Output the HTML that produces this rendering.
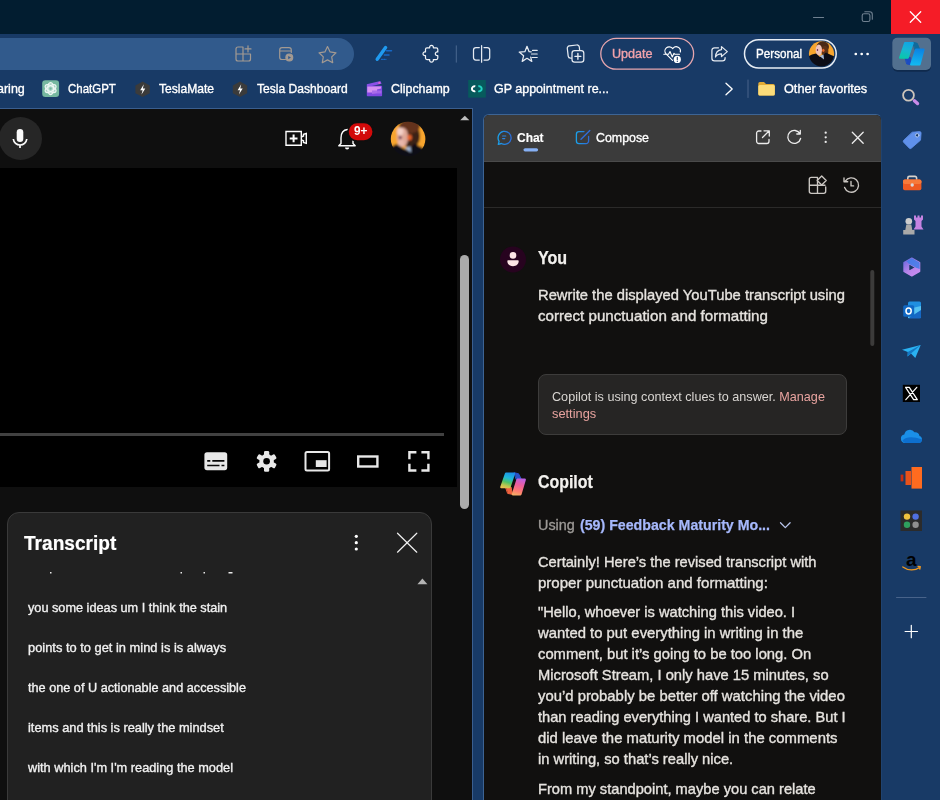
<!DOCTYPE html>
<html lang="en">
<head>
<meta charset="utf-8">
<title>Copilot sidebar - YouTube transcript</title>
<style>
*{box-sizing:border-box;margin:0;padding:0}
html,body{width:940px;height:800px;overflow:hidden}
body{background:#183a66;font-family:"Liberation Sans",sans-serif;position:relative;color:#fff}
.abs{position:absolute}
.t{position:absolute;white-space:nowrap;line-height:1;transform-origin:0 0;-webkit-text-stroke:0.35px currentColor}
svg{position:absolute;overflow:visible}
/* browser chrome */
#titlebar{left:0;top:0;width:940px;height:33.500px;background:#021d30}
#closebtn{left:891.300px;top:0;width:49px;height:33.500px;background:#f51c27}
#addr{left:-40px;top:38px;width:394px;height:32px;border-radius:16px;background:#315a8c}
#chromeline{left:0;top:107.8px;width:473.200px;height:700px;background:#3a5e8e}
.bm{font-size:13.5px;color:#fff;top:82px}
/* youtube page */
#page{left:0;top:109px;width:472.3px;height:691px;background:#0f0f0f;overflow:hidden}
#video{left:0;top:59px;width:457px;height:319px;background:#000}
#prog{left:0;top:323.500px;width:444px;height:3.500px;background:#414141}
#mic{left:-1.500px;top:8px;width:43px;height:43px;border-radius:22px;background:#262626}
#pscroll{left:458px;top:0;width:14px;height:691px;background:#0f0f0f}
#pthumb{left:460px;top:146px;width:9px;height:254px;border-radius:5px;background:#ababab}
#tpanel{left:7px;top:403px;width:425px;height:300px;border:1px solid #3a3a3a;border-radius:12px;background:#212121}
.tl{font-size:12.8px;color:#f1f1f1;left:28px}
/* copilot panel */
#cp{left:482.5px;top:113.5px;width:399px;height:692px;background:#11100f;border-radius:6px 6px 0 0;overflow:hidden;border:1px solid #3d6494;border-right-color:#1f426f}
#cphead{left:0;top:0;width:398px;height:47.800px;background:#3b3b3b;border-bottom:1px solid #4a4a4a}
#cpsep{left:0;top:92.5px;width:398px;height:1px;background:#2b2a29}
.ct{font-size:15.6px;color:#e9e7e4}
#card{left:537.700px;top:373.600px;width:309.500px;height:61px;border:1px solid #3d3c3b;border-radius:8px;background:#262524}
</style>
</head>
<body>
<!-- title bar -->
<div id="titlebar" class="abs"></div>
<div id="closebtn" class="abs"></div>
<div id="addr" class="abs"></div>
<div id="chromeline" class="abs"></div>

<!-- youtube page -->
<div id="page" class="abs">
  <div id="video" class="abs"></div>
  <div id="prog" class="abs"></div>
  <div id="mic" class="abs"></div>
  <div id="pscroll" class="abs"></div>
  <div id="pthumb" class="abs"></div>
  <div id="tpanel" class="abs"></div>
</div>

<!-- copilot panel -->
<div id="cp" class="abs">
  <div id="cphead" class="abs"></div>
  <div id="cpsep" class="abs"></div>
</div>
<div id="card" class="abs"></div>

<svg id="ico" width="940" height="800" viewBox="0 0 940 800" style="left:0;top:0" fill="none" stroke-linecap="round" stroke-linejoin="round">
<defs>
<linearGradient id="gcp1" gradientUnits="userSpaceOnUse" x1="918" y1="48" x2="916" y2="66"><stop offset="0" stop-color="#0b7fe2"/><stop offset="1" stop-color="#12bdf2"/></linearGradient>
<linearGradient id="gcp2" gradientUnits="userSpaceOnUse" x1="909" y1="42" x2="904" y2="59"><stop offset="0" stop-color="#10a4e4"/><stop offset="0.500" stop-color="#17b6d2"/><stop offset="1" stop-color="#08caa6"/></linearGradient>
<linearGradient id="gchat" x1="0" y1="0" x2="1" y2="0"><stop offset="0" stop-color="#1aa0ea"/><stop offset="1" stop-color="#2c6cd8"/></linearGradient>
<linearGradient id="gm365" gradientUnits="userSpaceOnUse" x1="905" y1="262" x2="917" y2="276"><stop offset="0" stop-color="#7a6ee0"/><stop offset="0.500" stop-color="#b884ea"/><stop offset="1" stop-color="#c88cf0"/></linearGradient>
<linearGradient id="gcop" x1="0" y1="0" x2="1" y2="0"><stop offset="0" stop-color="#3a8cf0"/><stop offset="0.35" stop-color="#30c8a0"/><stop offset="0.6" stop-color="#f0c030"/><stop offset="0.8" stop-color="#f06060"/><stop offset="1" stop-color="#c060e0"/></linearGradient>
<radialGradient id="gav" cx="0.45" cy="0.4" r="0.6"><stop offset="0" stop-color="#d9a27c"/><stop offset="0.45" stop-color="#b8764a"/><stop offset="1" stop-color="#f0a028"/></radialGradient>
<clipPath id="cav1"><circle cx="408.100" cy="139" r="17.300"/></clipPath>
<filter id="blur1" x="-10%" y="-10%" width="120%" height="120%"><feGaussianBlur stdDeviation="0.550"/></filter>
<filter id="blur3" x="-10%" y="-10%" width="120%" height="120%"><feGaussianBlur stdDeviation="0.700"/></filter>
<filter id="blur2" x="-10%" y="-10%" width="120%" height="120%"><feGaussianBlur stdDeviation="0.900"/></filter>
<clipPath id="cav2"><circle cx="821.500" cy="53.800" r="12.600"/></clipPath>
</defs>

<!-- ===== title bar controls ===== -->
<g stroke="#6f8090" stroke-width="1.1">
<path d="M813.500 17.500H823.600"/>
<rect x="862.200" y="13.800" width="7.700" height="7.700" rx="1.800"/>
<path d="M864.800 11.700H869.600a2.700 2.700 0 0 1 2.700 2.700V19.300"/>
</g>
<path d="M910.3 11.8 920.7 22.2M920.7 11.8 910.3 22.2" stroke="#fff" stroke-width="1.3"/>

<!-- ===== address bar icons (dim) ===== -->
<g stroke="#a39a92" stroke-width="1.2">
<path d="M243 47H238a2 2 0 0 0-2 2V59a2 2 0 0 0 2 2H248.5a2 2 0 0 0 2-2V54H236M243 47V61M243 54H250.5"/>
<path d="M248 45.8V52M245 48.9H251"/>
<path d="M285.5 59.5H282a2.3 2.3 0 0 1-2.3-2.3V50a2.3 2.3 0 0 1 2.3-2.3H289a2.3 2.3 0 0 1 2.3 2.3V52.5M279.8 51H291.2"/>
<circle cx="289.3" cy="57.6" r="3.4" fill="#a39a92"/>
<path d="M327.5 46.6 330.1 51.9 336 52.8 331.7 56.9 332.7 62.7 327.5 59.9 322.3 62.7 323.3 56.9 319 52.8 324.9 51.9Z"/>
</g>
<path d="M288.2 55.9V59.3L291 57.6Z" fill="#315a8c"/>

<!-- feather -->
<path d="M377.2 59.3 385.6 47.6" stroke="#1f9af0" stroke-width="3.4"/>
<path d="M386.5 50.8H391.5M384.4 55H389" stroke="#1668c8" stroke-width="1.5"/>
<path d="M381.5 59.3H386" stroke="#1668c8" stroke-width="1.2" stroke-dasharray="1 1.2"/>

<!-- puzzle -->
<path d="M427 47.800H429.700a1.900 1.900 0 1 1 3.600 0H436.300a1.500 1.500 0 0 1 1.500 1.500V52a1.900 1.900 0 1 0 0 3.600V58.100a1.500 1.500 0 0 1-1.500 1.500H433.300a1.900 1.900 0 1 1-3.600 0H427a1.500 1.500 0 0 1-1.500-1.500V55.600a1.900 1.900 0 1 1 0-3.600V49.300a1.500 1.500 0 0 1 1.500-1.500Z" stroke="#f0f3f7" stroke-width="1.200"/>
<path d="M456.3 45.800V62.200" stroke="#4a6890" stroke-width="1"/>

<!-- split screen -->
<g stroke="#e6ebf2" stroke-width="1.250">
<path d="M479.300 47.600H476a2.500 2.500 0 0 0-2.500 2.500V57.500a2.500 2.500 0 0 0 2.500 2.500H479.300M484 47.600H487.200a2.500 2.500 0 0 1 2.500 2.500V57.500a2.500 2.500 0 0 1-2.500 2.500H484M481.600 45.500V62.200"/>
<!-- favorites -->
<path d="M531.200 51.800 529.100 51.700 527 46.300 524.900 51.700 519.200 52.100 523.600 55.800 522.200 61.400 527 58.300 531.800 61.400 530.700 57.200"/>
<path d="M531.500 54H537.200M532 57.500H537.200M532.500 50.400H537.200" stroke-width="1.200"/>
<!-- collections -->
<path d="M571.500 58.200H570.500a2.300 2.300 0 0 1-2.300-2L567.300 48.500a2.300 2.300 0 0 1 2-2.600L576.700 45a2.300 2.300 0 0 1 2.600 2L579.600 50"/>
<rect x="572" y="50.600" width="11.800" height="11.600" rx="2.600"/>
<path d="M577.900 53.500V59.300M575 56.400H580.800" stroke-width="1.400"/>
</g>

<!-- update pill -->
<rect x="600.800" y="38.400" width="92.800" height="30.800" rx="15.400" stroke="#e6a6ae" stroke-width="1.300"/>
<path d="M672.500 60.300 666 53.800a4.200 4.200 0 0 1 6.300-5.600L672.700 48.600 673.100 48.200a4.200 4.200 0 0 1 7.200 3.800" stroke="#fff" stroke-width="1.200"/>
<path d="M663.800 54.300H668.500L670 51.500 672.300 57 674 53.300 675 54.300H679.500" stroke="#fff" stroke-width="1.100"/>
<circle cx="677.300" cy="59.400" r="3.600" fill="#fff"/>
<path d="M677.300 57.300V59.800M677.300 61.300V61.400" stroke="#183a66" stroke-width="1.100"/>

<!-- share -->
<g stroke="#e6ebf2" stroke-width="1.250">
<path d="M718.500 47.800H714.500a2.600 2.600 0 0 0-2.600 2.600V58.300a2.600 2.600 0 0 0 2.600 2.600H722.500a2.600 2.600 0 0 0 2.600-2.600V57.500"/>
<path d="M721.500 46.600 727.300 51.600 721.500 56.600V53.800C718.500 53.700 716.800 54.600 715.500 57 715.700 52.600 717.800 50 721.500 49.600Z"/>
</g>

<!-- personal pill -->
<rect x="744.500" y="39.700" width="91.700" height="28.300" rx="14.150" stroke="#e8eef5" stroke-width="1.500"/>
<g clip-path="url(#cav2)" filter="url(#blur3)">
<rect x="807" y="39" width="30" height="30" fill="#f8a52e"/>
<ellipse cx="822.800" cy="46.800" rx="6.200" ry="5.500" fill="#4c2a15"/>
<ellipse cx="824.800" cy="51" rx="3.600" ry="5" fill="#5e3319"/>
<ellipse cx="818.800" cy="50" rx="3.200" ry="5.600" fill="#efc2b8"/>
<ellipse cx="823.300" cy="50.300" rx="1.200" ry="1.600" fill="#e8682a"/>
<ellipse cx="817.500" cy="50" rx=".700" ry=".900" fill="#6a2a5a"/>
<path d="M807 57 812 54.500 816 53.500 820 57 826 52.500 831 55 836 57V68H807Z" fill="#0c1018"/>
<path d="M819.500 56 823.500 54.500 824 59.500Z" fill="#a9bcd8"/>
</g>
<g fill="#fff"><circle cx="855.800" cy="54" r="1.350"/><circle cx="861.700" cy="54" r="1.350"/><circle cx="867.600" cy="54" r="1.350"/></g>

<!-- copilot sidebar button -->
<rect x="892.600" y="39.800" width="38.400" height="32" rx="5" fill="#0a1f3c" opacity="0.600"/>
<rect x="892.300" y="37.800" width="38.700" height="32.200" rx="5" fill="#52708f"/>
<path d="M913.200 42.300 917.200 43.300 919.500 48.800 915 49.500Z" fill="#0e6a9c" stroke="#0e6a9c" stroke-width="1" stroke-linejoin="round"/>
<path d="M905.500 58 910.500 57.500 911.500 64.800 907 64Z" fill="#1b4cc2" stroke="#1b4cc2" stroke-width="1" stroke-linejoin="round"/>
<path d="M905 43H912.800L907.800 57.700H900Z" fill="url(#gcp2)" stroke="url(#gcp2)" stroke-width="2" stroke-linejoin="round"/>
<path d="M916 49.500H923.600L919.600 64.600H911Z" fill="url(#gcp1)" stroke="url(#gcp1)" stroke-width="2" stroke-linejoin="round"/>
<!-- search -->
<circle cx="908.500" cy="95.200" r="5.400" stroke="#cdc5bb" stroke-width="1.800"/>
<path d="M914.400 100.700 917.500 103.500" stroke="#c98ae8" stroke-width="3.400"/>
<!-- tag -->
<path d="M912.500 132.200 919.500 131.600a1.500 1.500 0 0 1 1.600 1.600L920.500 140.200 911.300 148.200a1.500 1.500 0 0 1-2.100-.1L903.600 142.300a1.500 1.500 0 0 1 .1-2.100Z" fill="#5f90ea" stroke="#5f90ea" stroke-width="0.800"/>
<circle cx="917.200" cy="135.300" r="1.700" fill="#183a66" stroke="#c8dcff" stroke-width="0.800"/>
<!-- toolbox -->
<path d="M907.800 179.500V178a1.600 1.600 0 0 1 1.600-1.600H915a1.600 1.600 0 0 1 1.600 1.600V179.500" stroke="#d8d2cc" stroke-width="1.600"/>
<rect x="903" y="179.500" width="18.400" height="10.800" rx="1.800" fill="#ee5a22"/>
<rect x="903" y="179.500" width="18.400" height="4.600" rx="1.800" fill="#f77a3a"/>
<circle cx="912.200" cy="185" r="1.700" fill="#d8d8dc"/>
<!-- chess -->
<path d="M914 215.500H916V217.500H917.500V215.500H919.500V217.500H921V215.500H923V219.500L921.500 221V226.500L923.500 229.500H913.500L915.500 226.500V221L914 219.500Z" fill="#c483e2"/>
<circle cx="908.800" cy="221.300" r="3.300" fill="#cdcdcd"/>
<path d="M906.300 224.500H911.300L912.300 230H914.500V234.500H903.200V230H905.300Z" fill="#a9a9a9"/>
<!-- m365 -->
<path d="M911.800 258.200 919.600 262.600V271.400L911.800 275.900 904 271.400V262.600ZM908.600 263.400V271.600L915.600 267.500Z" fill-rule="evenodd" fill="url(#gm365)" stroke="url(#gm365)" stroke-width="1.400" stroke-linejoin="round"/>
<path d="M911.800 258.200 919.600 262.600V269L915.600 267.500 908.600 263.400 906.500 261.200Z" fill="#3f7ce8" opacity=".85"/>
<!-- outlook -->
<rect x="908" y="301.500" width="13" height="15" rx="1.500" fill="#1f8fe0"/>
<path d="M908 309 921 306V316.500a1.500 1.500 0 0 1-1.500 1.500H908Z" fill="#55c2f2"/>
<path d="M908 318.500 921 310V317a1.500 1.500 0 0 1-1.500 1.500Z" fill="#1668c4"/>
<rect x="903.200" y="305.300" width="11" height="11.400" rx="1.500" fill="#1068c4"/>
<ellipse cx="908.600" cy="311" rx="2.600" ry="2.900" stroke="#fff" stroke-width="1.500"/>
<!-- telegram -->
<path d="M902 349.800 920.700 345 915.300 358 911 353.500 907.500 356.500 907.800 352Z" fill="#2ab2f2"/>
<path d="M907.800 352 920.700 345 911 353.500 907.500 356.500Z" fill="#1478c4"/>
<!-- X -->
<rect x="902.800" y="384.800" width="17.200" height="17.200" fill="#000"/>
<path d="M905.600 387.300H909.300L917.300 399.700H913.600ZM916.800 387.300 905.800 399.700" stroke="#fff" stroke-width="1.200"/>
<!-- onedrive -->
<path d="M905 443A4.300 4.300 0 0 1 904.300 434.500 5.600 5.600 0 0 1 914.500 432.300 4.600 4.600 0 0 1 919.500 436 3.600 3.600 0 0 1 918.500 443Z" fill="#1a8fe8"/>
<path d="M902.500 440.500C906 437 912 436 922 439.500A3.600 3.600 0 0 1 918.500 443H905A4.300 4.300 0 0 1 902.500 440.500Z" fill="#0d6fcf"/>
<!-- office orange -->
<rect x="911.500" y="467" width="10.500" height="21.600" fill="#ff6b1f"/>
<rect x="905.500" y="471" width="5.500" height="14" fill="#e8521a"/>
<rect x="900.600" y="474.600" width="2.800" height="6.800" fill="#c62f12"/>
<!-- apps -->
<rect x="900.500" y="510.500" width="21.500" height="20.500" fill="#2b2b2b"/>
<circle cx="907" cy="516.600" r="3.200" fill="#efc23e"/><circle cx="915.600" cy="516.600" r="3.200" fill="#4f6fe0"/>
<circle cx="907" cy="524.800" r="3.200" fill="#2e9f5e"/><circle cx="915.600" cy="524.800" r="3.200" fill="#8f8f8f"/>
<!-- amazon smile -->
<path d="M902.800 567C908 570.800 915 570.800 919.500 567.500M918 566.300 920.300 566.600 919.800 569" stroke="#f29a1e" stroke-width="1.300"/>
<!-- separator + plus -->
<path d="M896.500 597.500H926" stroke="#48638a" stroke-width="1"/>
<path d="M911.300 625.300V637.700M905.100 631.500H917.500" stroke="#fff" stroke-width="1.200"/>
<text x="906" y="565.800" style="font-family:'Liberation Sans',sans-serif;font-weight:700;font-size:19px" fill="#000" stroke="none">a</text>

<!-- ===== bookmarks bar icons ===== -->
<rect x="42.200" y="80.200" width="16.900" height="16.700" rx="3.200" fill="#76b8a0"/>
<circle cx="50.600" cy="88.600" r="5.600" fill="#d4ebe3" opacity=".55"/>
<g stroke="#eef7f4" stroke-width="1.200"><ellipse cx="50.600" cy="88.600" rx="2.800" ry="6"/><ellipse cx="50.600" cy="88.600" rx="2.800" ry="6" transform="rotate(60 50.600 88.600)"/><ellipse cx="50.600" cy="88.600" rx="2.800" ry="6" transform="rotate(120 50.600 88.600)"/></g>
<circle cx="50.600" cy="88.600" r="1.100" fill="#76b8a0"/>
<g id="tesl"><path d="M142.600 81.500 149.800 85.400V93.200L142.600 97.100 135.400 93.200V85.400Z" fill="#3b3b3b"/><path d="M143.800 84.300 140.200 90.200H142.600L141.500 94.600 145.300 88.500H142.900Z" fill="#fff"/></g>
<use href="#tesl" x="97.400"/>
<path d="M366.800 86V84.200L380.300 80.900 381.600 83.800 372 86Z" fill="#8a50e8"/>
<circle cx="379.300" cy="82.900" r="1.100" fill="#e060d0"/>
<rect x="366.800" y="85.700" width="15.300" height="10.600" rx=".8" fill="#8048e2"/>
<path d="M367.300 86.500H381V88.500L377 89.500V93L372 93.500V92.500H367.300Z" fill="#dc98f2" opacity=".92"/>
<path d="M372 90.500H381.500V93.500H372Z" fill="#a468ea" opacity=".9"/>
<rect x="468.200" y="80" width="17.600" height="17.600" fill="#075a5c"/>
<path d="M475.300 86.400A2.500 2.500 0 1 0 475.300 91.100" stroke="#fff" stroke-width="2" stroke-linecap="butt"/>
<path d="M478.300 86.400A2.500 2.500 0 1 1 478.300 91.100" stroke="#22d2c2" stroke-width="2" stroke-linecap="butt"/>
<path d="M726 83.300 732.200 89 726 94.700" stroke="#fff" stroke-width="1.300"/>
<path d="M748 80V97.500" stroke="#48638a" stroke-width="1"/>
<path d="M758.300 83.500a1.500 1.500 0 0 1 1.500-1.500H764L766 84H773.300a1.500 1.500 0 0 1 1.500 1.500V94a1.500 1.500 0 0 1-1.500 1.500H759.800a1.500 1.500 0 0 1-1.500-1.500Z" fill="#e2ab35"/>
<path d="M758.300 86.500a1.500 1.500 0 0 1 1.500-1.500H773.300a1.500 1.500 0 0 1 1.500 1.500V94a1.500 1.500 0 0 1-1.500 1.500H759.800a1.500 1.500 0 0 1-1.500-1.500Z" fill="#fbdc7a"/>

<!-- ===== youtube header ===== -->
<rect x="16.700" y="129" width="6.600" height="13" rx="3.300" fill="#fafafa"/>
<path d="M13.300 139a6.800 6.800 0 0 0 13.500 0M20 145.600V148" stroke="#fafafa" stroke-width="1.700" stroke-linecap="butt"/>
<g stroke="#fff" stroke-width="1.400" stroke-linejoin="miter" stroke-linecap="butt">
<path d="M286 131.500H301.300V145.300H286ZM301.300 137 303.500 136V134.300L306.300 133.500V143.300L303.500 142.500V140.800L301.300 139.800"/>
<path d="M293.600 134.500V142.300M289.700 138.400H297.500" stroke-width="2"/>
</g>
<path d="M347.500 129.500C342.500 130 341 134 341 138V143.500L338.800 145.800H355.200L353 143.500V141" stroke="#fff" stroke-width="1.400"/>
<path d="M345 147.500a2.100 2.100 0 0 0 4.200 0Z" fill="#fff"/>
<rect x="348" y="122.600" width="25.200" height="18.400" rx="9.200" fill="#d20a0a" stroke="#0f0f0f" stroke-width="1.500"/>
<g clip-path="url(#cav1)" filter="url(#blur2)">
<rect x="388" y="119" width="40" height="40" fill="#f8a52e"/>
<ellipse cx="411" cy="136" rx="9" ry="12.500" fill="#3a2216"/>
<ellipse cx="409.500" cy="126.500" rx="10.500" ry="7" fill="#64321a"/>
<ellipse cx="402.600" cy="137.300" rx="5.600" ry="9.800" fill="#dfa898"/>
<ellipse cx="400.200" cy="131.500" rx="3.200" ry="4" fill="#f3cfc6"/>
<ellipse cx="401" cy="143" rx="3" ry="3.500" fill="#e8b8ac"/>
<ellipse cx="409.600" cy="137.600" rx="2.300" ry="3" fill="#e4602a"/>
<ellipse cx="400.200" cy="137.600" rx="1.400" ry="1.800" fill="#5a2450"/>
<path d="M389 148 396.500 144 403.500 148.500 409 150.500 414 143.500 420 146.500 428 151V160H388Z" fill="#0a0e15"/>
<path d="M404.500 148 410.500 146.500 411 152.500Z" fill="#a3b8d8"/>
</g>
<path d="M460.200 120.300 464.800 115.800 469.400 120.300Z" fill="#bdbdbd"/>

<!-- ===== player controls ===== -->
<rect x="204.400" y="452.200" width="22.800" height="18" rx="2.600" fill="#e8e8e8"/>
<path d="M207.200 460.800H210.300M212.300 460.800H224.400M207.200 465.500H219.500M221.500 465.500H224.400" stroke="#0a0a0a" stroke-width="1.700" stroke-linecap="butt"/>
<g transform="translate(266.600 461.300)" fill="#e8e8e8">
<circle r="7.200"/>
<g id="gt"><rect x="-2.600" y="-10.400" width="5.200" height="20.800" rx="1.300"/></g>
<use href="#gt" transform="rotate(60)"/><use href="#gt" transform="rotate(120)"/>
<circle r="3.300" fill="#000"/>
</g>
<rect x="305.500" y="452" width="23.600" height="18.400" rx="1.500" stroke="#e8e8e8" stroke-width="2"/>
<rect x="315.800" y="460.200" width="10.800" height="6.800" fill="#e6e6e6"/>
<rect x="358.200" y="456.500" width="19.200" height="10" stroke="#e8e8e8" stroke-width="2.400" stroke-linejoin="miter"/>
<path d="M409.400 459.200V452.300H416.400M421.400 452.300H428.400V459.200M428.400 463.700V470.500H421.400M416.400 470.500H409.400V463.700" stroke="#e8e8e8" stroke-width="2.400" stroke-linecap="butt" stroke-linejoin="miter"/>

<!-- ===== transcript header ===== -->
<g fill="#fff"><circle cx="356.300" cy="536.300" r="1.600"/><circle cx="356.300" cy="542.700" r="1.600"/><circle cx="356.300" cy="549" r="1.600"/></g>
<path d="M397.500 533.200 416.800 552.200M416.800 533.200 397.500 552.200" stroke="#f1f1f1" stroke-width="1.200"/>
<path d="M417.400 584.300 422.400 578.600 427.400 584.300Z" fill="#b4b4b4"/>
<g fill="#e8e8e8"><rect x="50" y="572" width="1.500" height="1.500"/><rect x="180.500" y="572" width="1.500" height="1.500"/><rect x="203.500" y="572" width="1.500" height="1.500"/><rect x="228.500" y="572" width="4" height="1.500"/></g>

<!-- ===== copilot panel header ===== -->
<path d="M498.300 144.300 499.100 141.300A6.500 6.500 0 1 1 501.400 143.500Z" stroke="url(#gchat)" stroke-width="1.300"/>
<path d="M502.600 136H505.800M502.600 138.600H504.800" stroke="#2a84e0" stroke-width="1.100"/>
<path d="M584 131.600H579a2.600 2.600 0 0 0-2.600 2.600V141a2.600 2.600 0 0 0 2.600 2.600H586a2.600 2.600 0 0 0 2.600-2.600V136.500" stroke="url(#gchat)" stroke-width="1.300"/>
<path d="M581 139.200 589.800 130.500" stroke="#2f6cd8" stroke-width="1.400"/>
<rect x="523.500" y="148.200" width="14.600" height="3.200" rx="1.600" fill="#86b0f4"/>
<g stroke="#ececec" stroke-width="1.300">
<path d="M761 131H758.800a2.200 2.200 0 0 0-2.200 2.200V141.300a2.200 2.200 0 0 0 2.200 2.200H766.800a2.200 2.200 0 0 0 2.200-2.200V139.500M764 130.800H769.300V136M769 131 762.500 137.500"/>
<path d="M800 133.800A6.500 6.500 0 1 0 800.600 138.500M800.300 130.500V134H796.800"/>
<path d="M852.300 132.200 863.200 143.200M863.200 132.200 852.300 143.200"/>
</g>
<g fill="#ececec"><circle cx="825.700" cy="132.700" r="1.150"/><circle cx="825.700" cy="137.300" r="1.150"/><circle cx="825.700" cy="141.900" r="1.150"/></g>
<g stroke="#cbc7c3" stroke-width="1.350">
<path d="M817.500 177.300H811.300a2 2 0 0 0-2 2V191.300a2 2 0 0 0 2 2H823.700a2 2 0 0 0 2-2V186.800M817.500 177.300V193.300M809.300 185.200H825"/>
<path d="M821.700 176 826.200 180.500 821.700 185 817.200 180.500Z"/>
<path d="M845.300 181.200A7.200 7.200 0 1 1 844.600 187.500M844 178V181.700H847.700M851 181.300V185.900H853.600"/>
</g>

<!-- you avatar -->
<circle cx="513" cy="259.500" r="13" fill="#27031f"/>
<circle cx="513" cy="255.400" r="3.300" fill="#fde6e6"/>
<path d="M508.200 260.200H517.800a.9.900 0 0 1 .9.900C518.700 264.300 516.200 266.300 513 266.300S507.300 264.300 507.300 261.100a.9.900 0 0 1 .9-.9Z" fill="#fde6e6"/>
<!-- copilot color logo -->
<defs>
<linearGradient id="gcopL" gradientUnits="userSpaceOnUse" x1="510" y1="472" x2="505" y2="489"><stop offset="0" stop-color="#1a8cea"/><stop offset="0.350" stop-color="#1fb8d8"/><stop offset="0.600" stop-color="#4fc266"/><stop offset="0.800" stop-color="#b9c650"/><stop offset="1" stop-color="#f4bf52"/></linearGradient>
<linearGradient id="gcopR" gradientUnits="userSpaceOnUse" x1="522" y1="478" x2="517" y2="496"><stop offset="0" stop-color="#b860ea"/><stop offset="0.400" stop-color="#ec5e9c"/><stop offset="0.750" stop-color="#ff7d70"/><stop offset="1" stop-color="#f4b064"/></linearGradient>
</defs>
<path d="M514.500 472.800 518.600 473.800 521.200 479 516.500 479.500Z" fill="#2a52c8" stroke="#2a52c8" stroke-width="1" stroke-linejoin="round"/>
<path d="M506 487.500 511 487 512.500 494.300 508 493.500Z" fill="#f0623e" stroke="#f0623e" stroke-width="1" stroke-linejoin="round"/>
<path d="M506 473.600H514L509.500 487.200H501.300Z" fill="url(#gcopL)" stroke="url(#gcopL)" stroke-width="2.200" stroke-linejoin="round"/>
<path d="M517.500 479.600H524.800L520.500 494.300H512.800Z" fill="url(#gcopR)" stroke="url(#gcopR)" stroke-width="2.200" stroke-linejoin="round"/>
<path d="M780.500 522.800 785.300 527.600 790.100 522.800" stroke="#b8c4ea" stroke-width="1.300"/>
<!-- panel scrollbar -->
<rect x="870.300" y="270" width="4" height="76" rx="2" fill="#3c3b3a"/>
</svg>

<div class="t" style="left:-3.2px;top:82.0px;font-size:13px;font-weight:400;color:#ffffff;transform:scaleX(0.9612);">aring</div>
<div class="t" style="left:67.6px;top:82.0px;font-size:13px;font-weight:400;color:#ffffff;transform:scaleX(0.8821);">ChatGPT</div>
<div class="t" style="left:159.0px;top:82.0px;font-size:13px;font-weight:400;color:#ffffff;transform:scaleX(0.9283);">TeslaMate</div>
<div class="t" style="left:257.3px;top:82.0px;font-size:13px;font-weight:400;color:#ffffff;transform:scaleX(0.9297);">Tesla Dashboard</div>
<div class="t" style="left:391.3px;top:82.0px;font-size:13px;font-weight:400;color:#ffffff;transform:scaleX(0.9557);">Clipchamp</div>
<div class="t" style="left:494.0px;top:82.0px;font-size:13px;font-weight:400;color:#ffffff;transform:scaleX(0.9606);">GP appointment re...</div>
<div class="t" style="left:783.5px;top:82.0px;font-size:13px;font-weight:400;color:#ffffff;transform:scaleX(0.9758);">Other favorites</div>
<div class="t" style="left:612.4px;top:47.2px;font-size:13px;font-weight:400;color:#f2a3ab;transform:scaleX(0.9685);">Update</div>
<div class="t" style="left:755.8px;top:47.1px;font-size:13px;font-weight:400;color:#ffffff;transform:scaleX(0.8965);">Personal</div>
<div class="t" style="left:517.2px;top:130.6px;font-size:13px;font-weight:700;color:#ffffff;transform:scaleX(0.9207);-webkit-text-stroke:0.15px;">Chat</div>
<div class="t" style="left:595.5px;top:130.6px;font-size:13px;font-weight:400;color:#ffffff;transform:scaleX(0.9525);">Compose</div>
<div class="t" style="left:24.2px;top:532.6px;font-size:20px;font-weight:700;color:#ffffff;transform:scaleX(0.9555);-webkit-text-stroke:0.2px;">Transcript</div>
<div class="t" style="left:28.2px;top:600.8px;font-size:13px;font-weight:400;color:#f1f1f1;transform:scaleX(0.9775);">you some ideas um I think the stain</div>
<div class="t" style="left:28.2px;top:640.8px;font-size:13px;font-weight:400;color:#f1f1f1;transform:scaleX(0.9897);">points to to get in mind is is always</div>
<div class="t" style="left:28.2px;top:680.8px;font-size:13px;font-weight:400;color:#f1f1f1;transform:scaleX(0.9761);">the one of U actionable and accessible</div>
<div class="t" style="left:28.2px;top:720.8px;font-size:13px;font-weight:400;color:#f1f1f1;transform:scaleX(0.9854);">items and this is really the mindset</div>
<div class="t" style="left:28.2px;top:760.8px;font-size:13px;font-weight:400;color:#f1f1f1;transform:scaleX(0.9822);">with which I'm I'm reading the model</div>
<div class="t" style="left:353.5px;top:125.2px;font-size:12.5px;font-weight:700;color:#ffffff;transform:scaleX(0.9463);-webkit-text-stroke:0;">9+</div>
<div class="t" style="left:538.2px;top:249.7px;font-size:17.5px;font-weight:700;color:#f3f1ee;transform:scaleX(0.9192);-webkit-text-stroke:0.25px;">You</div>
<div class="t" style="left:538.1px;top:286.8px;font-size:15px;font-weight:400;color:#e6e3df;transform:scaleX(0.9832);">Rewrite the displayed YouTube transcript using</div>
<div class="t" style="left:538.1px;top:307.8px;font-size:15px;font-weight:400;color:#e6e3df;transform:scaleX(1.0099);">correct punctuation and formatting</div>
<div class="t" style="left:551.8px;top:389.8px;font-size:13px;font-weight:400;color:#d9d6d2;transform:scaleX(0.9708);-webkit-text-stroke:0;">Copilot is using context clues to answer. <span style="color:#e8a39f">Manage</span></div>
<div class="t" style="left:551.8px;top:406.8px;font-size:13px;font-weight:400;color:#e8a39f;transform:scaleX(0.9863);-webkit-text-stroke:0;">settings</div>
<div class="t" style="left:538.2px;top:474.1px;font-size:17.5px;font-weight:700;color:#f3f1ee;transform:scaleX(0.9093);-webkit-text-stroke:0.25px;">Copilot</div>
<div class="t" style="left:538.4px;top:517.1px;font-size:15px;font-weight:400;color:#9d9a97;transform:scaleX(0.9593);">Using</div>
<div class="t" style="left:579.7px;top:517.1px;font-size:15px;font-weight:700;color:#a6b8fb;transform:scaleX(0.9459);-webkit-text-stroke:0.25px;">(59) Feedback Maturity Mo...</div>
<div class="t" style="left:538.1px;top:553.5px;font-size:15px;font-weight:400;color:#e6e3df;transform:scaleX(0.9777);">Certainly! Here’s the revised transcript with</div>
<div class="t" style="left:538.1px;top:574.5px;font-size:15px;font-weight:400;color:#e6e3df;transform:scaleX(1.0025);">proper punctuation and formatting:</div>
<div class="t" style="left:538.1px;top:604.1px;font-size:15px;font-weight:400;color:#e6e3df;transform:scaleX(0.9777);">"Hello, whoever is watching this video. I</div>
<div class="t" style="left:538.1px;top:625.1px;font-size:15px;font-weight:400;color:#e6e3df;transform:scaleX(0.9908);">wanted to put everything in writing in the</div>
<div class="t" style="left:538.1px;top:646.1px;font-size:15px;font-weight:400;color:#e6e3df;transform:scaleX(0.9849);">comment, but it’s going to be too long. On</div>
<div class="t" style="left:538.1px;top:667.1px;font-size:15px;font-weight:400;color:#e6e3df;transform:scaleX(0.9819);">Microsoft Stream, I only have 15 minutes, so</div>
<div class="t" style="left:538.1px;top:688.1px;font-size:15px;font-weight:400;color:#e6e3df;transform:scaleX(0.9902);">you’d probably be better off watching the video</div>
<div class="t" style="left:538.1px;top:709.1px;font-size:15px;font-weight:400;color:#e6e3df;transform:scaleX(0.9759);">than reading everything I wanted to share. But I</div>
<div class="t" style="left:538.1px;top:730.1px;font-size:15px;font-weight:400;color:#e6e3df;transform:scaleX(0.9923);">did leave the maturity model in the comments</div>
<div class="t" style="left:538.1px;top:751.1px;font-size:15px;font-weight:400;color:#e6e3df;transform:scaleX(0.9810);">in writing, so that’s really nice.</div>
<div class="t" style="left:538.1px;top:780.9px;font-size:15px;font-weight:400;color:#e6e3df;transform:scaleX(0.9768);">From my standpoint, maybe you can relate</div>
</body>
</html>
